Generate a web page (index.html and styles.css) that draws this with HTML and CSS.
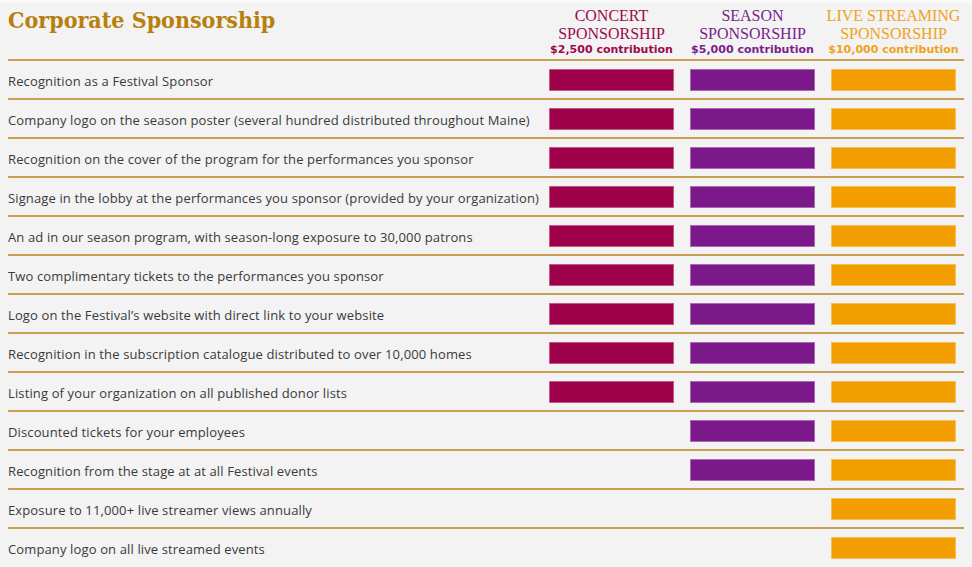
FILE: index.html
```html
<!DOCTYPE html>
<html lang="en">
<head>
<meta charset="utf-8">
<title>Corporate Sponsorship</title>
<link rel="stylesheet" href="styles.css">
</head>
<body>
<div class="sheet">
  <div class="head">
    <h1 class="title">Corporate Sponsorship</h1>
    <div class="tier concert"><div class="tier-name">CONCERT<br>SPONSORSHIP</div><div class="amount">$2,500 contribution</div></div>
    <div class="tier season"><div class="tier-name">SEASON<br>SPONSORSHIP</div><div class="amount">$5,000 contribution</div></div>
    <div class="tier live"><div class="tier-name">LIVE STREAMING<br>SPONSORSHIP</div><div class="amount">$10,000 contribution</div></div>
  </div>

  <div class="row"><div class="label">Recognition as a Festival Sponsor</div><div class="cell"><span class="bar concert-bar"></span></div><div class="cell"><span class="bar season-bar"></span></div><div class="cell"><span class="bar live-bar"></span></div></div>
  <div class="row"><div class="label">Company logo on the season poster (several hundred distributed throughout Maine)</div><div class="cell"><span class="bar concert-bar"></span></div><div class="cell"><span class="bar season-bar"></span></div><div class="cell"><span class="bar live-bar"></span></div></div>
  <div class="row"><div class="label">Recognition on the cover of the program for the performances you sponsor</div><div class="cell"><span class="bar concert-bar"></span></div><div class="cell"><span class="bar season-bar"></span></div><div class="cell"><span class="bar live-bar"></span></div></div>
  <div class="row"><div class="label">Signage in the lobby at the performances you sponsor (provided by your organization)</div><div class="cell"><span class="bar concert-bar"></span></div><div class="cell"><span class="bar season-bar"></span></div><div class="cell"><span class="bar live-bar"></span></div></div>
  <div class="row"><div class="label">An ad in our season program, with season-long exposure to 30,000 patrons</div><div class="cell"><span class="bar concert-bar"></span></div><div class="cell"><span class="bar season-bar"></span></div><div class="cell"><span class="bar live-bar"></span></div></div>
  <div class="row"><div class="label">Two complimentary tickets to the performances you sponsor</div><div class="cell"><span class="bar concert-bar"></span></div><div class="cell"><span class="bar season-bar"></span></div><div class="cell"><span class="bar live-bar"></span></div></div>
  <div class="row"><div class="label">Logo on the Festival’s website with direct link to your website</div><div class="cell"><span class="bar concert-bar"></span></div><div class="cell"><span class="bar season-bar"></span></div><div class="cell"><span class="bar live-bar"></span></div></div>
  <div class="row"><div class="label">Recognition in the subscription catalogue distributed to over 10,000 homes</div><div class="cell"><span class="bar concert-bar"></span></div><div class="cell"><span class="bar season-bar"></span></div><div class="cell"><span class="bar live-bar"></span></div></div>
  <div class="row"><div class="label">Listing of your organization on all published donor lists</div><div class="cell"><span class="bar concert-bar"></span></div><div class="cell"><span class="bar season-bar"></span></div><div class="cell"><span class="bar live-bar"></span></div></div>
  <div class="row"><div class="label">Discounted tickets for your employees</div><div class="cell"></div><div class="cell"><span class="bar season-bar"></span></div><div class="cell"><span class="bar live-bar"></span></div></div>
  <div class="row"><div class="label">Recognition from the stage at at all Festival events</div><div class="cell"></div><div class="cell"><span class="bar season-bar"></span></div><div class="cell"><span class="bar live-bar"></span></div></div>
  <div class="row"><div class="label">Exposure to 11,000+ live streamer views annually</div><div class="cell"></div><div class="cell"></div><div class="cell"><span class="bar live-bar"></span></div></div>
  <div class="row last"><div class="label">Company logo on all live streamed events</div><div class="cell"></div><div class="cell"></div><div class="cell"><span class="bar live-bar"></span></div></div>
</div>
</body>
</html>
```

FILE: styles.css
```css
html, body {
  margin: 0;
  padding: 0;
  background: #f3f3f3;
}

body {
  border-top: 3px solid #fafafa;
  font-family: "Open Sans", "Liberation Sans", sans-serif;
  color: #3a3a3a;
}

.sheet {
  margin: 0 8px;
  width: 956px;
}

.head,
.row {
  display: grid;
  grid-template-columns: 533px 141px 141px 141px;
}

.head {
  padding-top: 4px;
  padding-bottom: 2px;
  border-bottom: 2px solid #cba255;
}

.title {
  margin: 0;
  font-family: "DejaVu Serif", "Liberation Serif", serif;
  font-stretch: condensed;
  font-weight: bold;
  font-size: 23px;
  line-height: 26px;
  color: #b7800c;
}

.tier {
  text-align: center;
}

.tier-name {
  font-family: "Liberation Serif", serif;
  font-size: 16px;
  line-height: 18px;
}

.amount {
  font-family: "DejaVu Sans", sans-serif;
  font-weight: bold;
  font-size: 11px;
  line-height: 14px;
}

.concert { color: #9c0a4c; }
.season { color: #7b1e8c; }
.live { color: #f0a21c; }

.row {
  height: 37px;
  align-items: center;
  border-bottom: 2px solid #c99f52;
}

.row.last {
  border-bottom: none;
}

.label {
  font-size: 13px;
  letter-spacing: 0.13px;
  white-space: nowrap;
  padding-top: 2px;
}

.cell {
  display: flex;
  justify-content: center;
}

.bar {
  display: block;
  width: 125px;
  height: 22px;
  box-sizing: border-box;
  border: 1px solid rgba(255, 255, 255, 0.35);
}

.concert-bar { background: #9e0049; }
.season-bar { background: #7b198b; }
.live-bar { background: #f29e00; }
```
